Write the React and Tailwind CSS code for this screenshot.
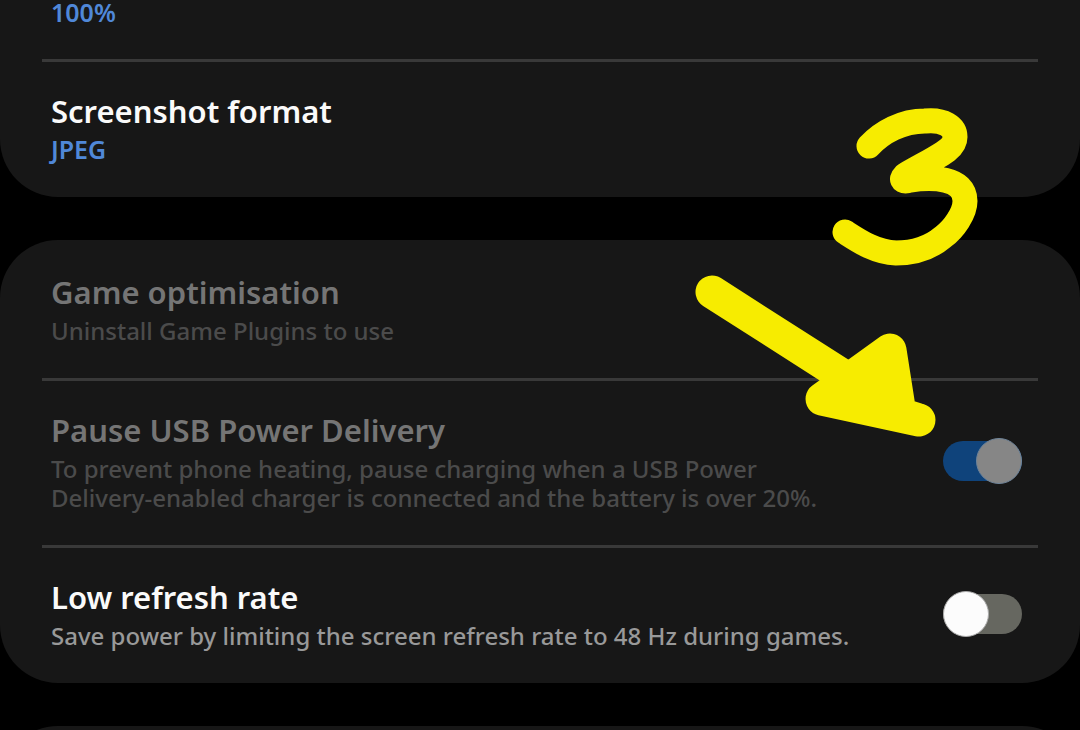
import { useState } from "react";

function Card({ children }) {
    return <section className="rounded-[58px] bg-[#171717] px-[42px]">{children}</section>;
}

function Row({ id, title, value, note, disabled, first, children }) {
    const titleClass = `block text-[31px] leading-10 font-semibold ${disabled ? "text-[#757575]" : "text-[#fafafa]"}`;

    return (
        <div
            className={`flex items-center justify-between gap-12 border-t-[3px] pt-[29px] pr-4 pb-[33px] pl-[9px] ${
                first ? "border-transparent" : "border-[#393939]"
            }`}
        >
            <div className="min-w-0 flex-1">
                {children ? (
                    <label htmlFor={id} className={titleClass}>
                        {title}
                    </label>
                ) : (
                    <h2 className={titleClass}>{title}</h2>
                )}
                {value && <p className="mt-1 text-[25px] leading-[29px] font-semibold text-[#5088d8]">{value}</p>}
                {note && (
                    <p
                        id={`${id}-note`}
                        className={`mt-1 max-w-[800px] text-[24px] leading-[29px] font-medium ${disabled ? "text-[#4b4b4b]" : "text-[#999999]"}`}
                    >
                        {note}
                    </p>
                )}
            </div>
            {children}
        </div>
    );
}

function Toggle({ id, ...props }) {
    return (
        <input
            id={id}
            type="checkbox"
            role="switch"
            aria-describedby={`${id}-note`}
            className="flex h-10 w-[79px] shrink-0 appearance-none items-center rounded-full bg-[#666760] before:size-[46px] before:shrink-0 before:rounded-full before:border before:border-[#aaaaaa] before:bg-[#fcfcfc] checked:justify-end checked:bg-[#0f437b] checked:before:border-[#6f8499] checked:before:bg-[#868686]"
            {...props}
        />
    );
}

function Annotation() {
    return (
        <svg
            aria-hidden="true"
            viewBox="690 100 300 350"
            className="pointer-events-none absolute top-[100px] right-[90px] h-[350px] w-[300px]"
            fill="none"
            stroke="#f7ec00"
            strokeLinecap="round"
            strokeLinejoin="round"
        >
            <path
                strokeWidth="25"
                d="M869 146C882 132 902 121 925 121C944 119 955 127 955 137C955 150 938 156 905 175C899 181 905 182 910 180C932 177 965 177 965 201C965 213 954 229 943 237C930 248 914 253 896 253C875 252 859 241 845 232"
            />
            <path strokeWidth="33" d="M712 292L870 393" />
            <path strokeWidth="33" fill="#f7ec00" d="M890 350L822 399L919 420L900 414Z" />
        </svg>
    );
}

export default function App() {
    const [lowRefresh, setLowRefresh] = useState(false);

    return (
        <main className="relative h-screen overflow-hidden bg-black font-['Noto_Sans',sans-serif]">
            <div className="flex flex-col gap-[43px]">
                <section className="rounded-b-[58px] bg-[#171717] px-[42px]">
                    <p className="pb-[34px] pl-[9px] text-[25px] leading-[25px] font-semibold text-[#5088d8]">100%</p>
                    <Row id="format" title="Screenshot format" value="JPEG" />
                </section>

                <Card>
                    <Row id="optimisation" title="Game optimisation" note="Uninstall Game Plugins to use" disabled first />
                    <Row
                        id="pause-usb"
                        title="Pause USB Power Delivery"
                        note="To prevent phone heating, pause charging when a USB Power Delivery-enabled charger is connected and the battery is over 20%."
                        disabled
                    >
                        <Toggle id="pause-usb" defaultChecked disabled />
                    </Row>
                    <Row
                        id="low-refresh"
                        title="Low refresh rate"
                        note="Save power by limiting the screen refresh rate to 48 Hz during games."
                    >
                        <Toggle
                            id="low-refresh"
                            checked={lowRefresh}
                            onChange={(e) => setLowRefresh(e.target.checked)}
                        />
                    </Row>
                </Card>

                <section className="h-32 rounded-t-[58px] bg-[#171717]" />
            </div>
            <Annotation />
        </main>
    );
}
